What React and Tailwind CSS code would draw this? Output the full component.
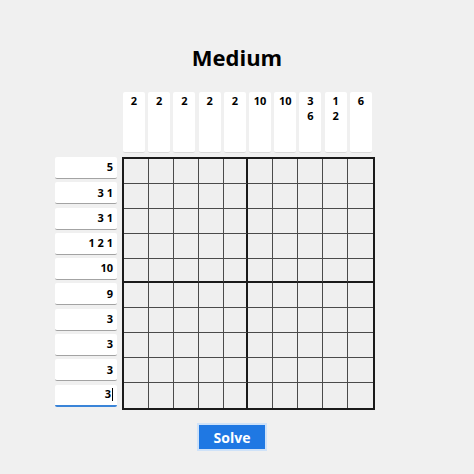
const colClues = [['2'], ['2'], ['2'], ['2'], ['2'], ['10'], ['10'], ['3', '6'], ['1', '2'], ['6']];
const rowClues = ['5', '3 1', '3 1', '1 2 1', '10', '9', '3', '3', '3', '3'];

function Cell({ r, c }) {
  const right = c === 9 ? '' : c === 4 ? 'border-r-2 border-r-[#1a1a1a]' : 'border-r border-r-[#4a4a4a]';
  const bottom = r === 9 ? '' : r === 4 ? 'border-b-2 border-b-[#1a1a1a]' : 'border-b border-b-[#4a4a4a]';
  return <div className={`bg-[#efefef] ${right} ${bottom}`} />;
}

export default function App() {
  return (
    <div className="min-h-screen w-full bg-[#f0f0f0] font-['Open_Sans','Noto_Sans',sans-serif] text-black">
      <h1 className="pt-[42px] text-center text-[22px] font-bold leading-[30px]">Medium</h1>

      <div className="mt-[20px] ml-[55px] grid grid-cols-[62px_253px] gap-x-[5px] gap-y-[4px]">
        <div />
        <div className="grid grid-cols-10 pl-[1px]">
          {colClues.map((clue, i) => (
            <div
              key={i}
              className="flex h-[61px] w-[22px] flex-col items-center rounded-[2px] border-b border-[#d8d8d8] bg-white pt-[1px] text-[11px] font-bold leading-[15px]"
            >
              {clue.map((n, j) => (
                <span key={j}>{n}</span>
              ))}
            </div>
          ))}
        </div>

        <div className="grid grid-rows-10">
          {rowClues.map((clue, i) => (
            <div
              key={i}
              className={`flex h-[22px] w-[62px] items-center justify-end rounded-[2px] bg-white pr-[4px] text-[11px] font-bold ${
                i === 9 ? 'border-b-2 border-[#3a84d8]' : 'border-b border-[#a3a3a3]'
              }`}
            >
              {clue}
              {i === 9 && <span className="ml-[1px] inline-block h-[13px] w-px bg-black" />}
            </div>
          ))}
        </div>

        <div className="grid h-[253px] grid-cols-10 grid-rows-10 border-2 border-[#1a1a1a]">
          {Array.from({ length: 100 }, (_, k) => (
            <Cell key={k} r={Math.floor(k / 10)} c={k % 10} />
          ))}
        </div>
      </div>

      <div className="mt-[13px] ml-[197px]">
        <button className="h-[28px] w-[70px] border-2 border-[#cfe2f8] bg-[#1f78e3] text-[14px] font-bold text-white">
          Solve
        </button>
      </div>
    </div>
  );
}
